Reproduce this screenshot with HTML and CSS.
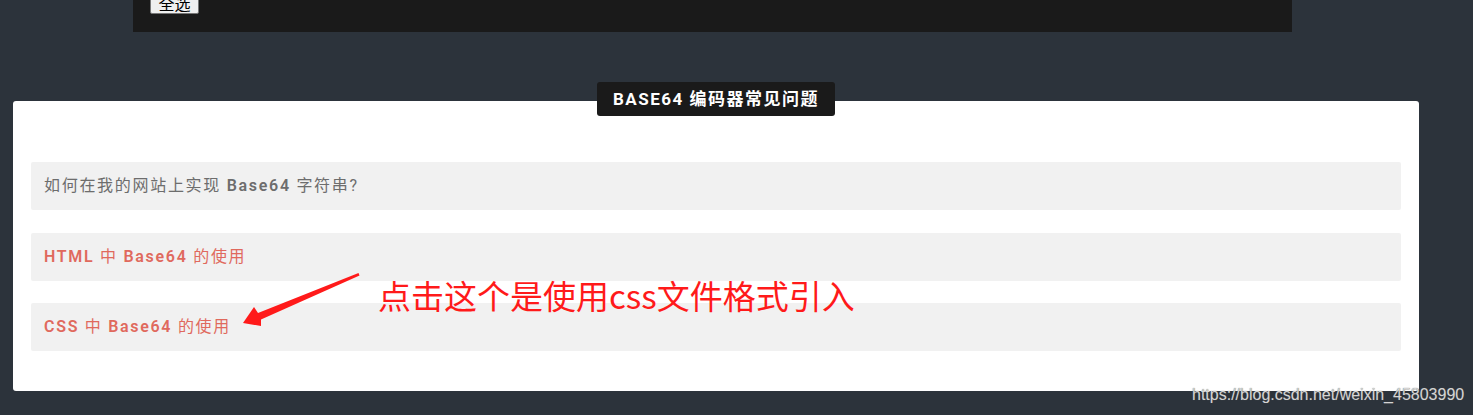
FILE: index.html
```html
<!DOCTYPE html>
<html lang="zh-CN">
<head>
    <meta charset="UTF-8">
    <meta name="viewport" content="width=device-width, initial-scale=1.0">
    <title>Base64 编码器</title>
    <link rel="stylesheet" href="styles.css">
</head>
<body>
    <div class="tool-box">
        <button class="btn-select">全选</button>
    </div>

    <div class="faq">
        <div class="faq-title">BASE64 编码器常见问题</div>
        <div class="faq-list">
            <div class="faq-item gray">如何在我的网站上实现 <b>Base64</b> 字符串?</div>
            <div class="faq-item"><b>HTML</b> 中 <b>Base64</b> 的使用</div>
            <div class="faq-item"><b>CSS</b> 中 <b>Base64</b> 的使用</div>
        </div>

        <svg class="arrow" width="130" height="60" viewBox="235 268 130 60">
            <polygon fill="#ff1a1a" points="359.5,275.5 261,319.5 261,326 243,323 254,307 258,313 358.5,273"/>
        </svg>
        <div class="note">点击这个是使用css文件格式引入</div>
    </div>

    <div class="watermark">https://blog.csdn.net/weixin_45803990</div>
</body>
</html>
```

FILE: styles.css
```css
body {
    margin: 0;
    padding: 0;
    height: 415px;
    overflow: hidden;
    position: relative;
    background-color: #2c333b;
    font-family: Roboto, "Noto Sans CJK SC", sans-serif;
}
.tool-box {
    display: flex;
    align-items: flex-start;
    margin-left: 133px;
    width: 1159px;
    height: 32px;
    background-color: #1a1a1a;
    padding-left: 17px;
    box-sizing: border-box;
}
.btn-select {
    margin-top: -9px;
    width: 49px;
    height: 23px;
    padding: 0;
    font-family: "Noto Sans CJK SC", sans-serif;
    font-size: 16px;
    line-height: 20px;
    color: #000;
    background-color: #efefef;
    border: 1px solid #767676;
    border-radius: 2px;
}
.faq {
    position: relative;
    margin: 69px 0 0 13px;
    width: 1406px;
    height: 290px;
    background-color: #fff;
    border-radius: 3px;
    padding: 61px 18px 0;
    box-sizing: border-box;
}
.faq-title {
    position: absolute;
    top: -19px;
    left: 584px;
    width: 238px;
    height: 34px;
    line-height: 34px;
    text-align: center;
    background-color: #1a1a1a;
    color: #fff;
    font-weight: bold;
    font-size: 17px;
    letter-spacing: 1.5px;
    border-radius: 3px;
}
.faq-list {
    display: flex;
    flex-direction: column;
    gap: 22.5px;
}
.faq-item {
    height: 48px;
    line-height: 48px;
    padding-left: 13px;
    background-color: #f1f1f1;
    border-radius: 2px;
    font-size: 16px;
    letter-spacing: 1.7px;
    color: #e0695d;
}
.faq-item.gray {
    color: #6d6d6d;
}
.faq-item b {
    font-weight: 600;
}
.arrow {
    position: absolute;
    left: 222px;
    top: 167px;
}
.note {
    position: absolute;
    left: 365px;
    top: 173px;
    font-family: "Noto Sans CJK SC", sans-serif;
    font-size: 33px;
    line-height: 42px;
    color: #ff1a1a;
}
.watermark {
    position: absolute;
    left: 1192px;
    top: 386px;
    font-family: "Liberation Sans", Arial, sans-serif;
    font-size: 16px;
    color: #d4d4d4;
    text-shadow: 0 0 1px #555;
}
```
